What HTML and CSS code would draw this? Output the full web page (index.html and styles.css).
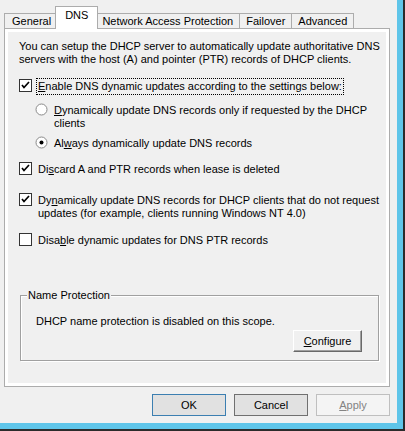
FILE: index.html
```html
<!DOCTYPE html>
<html lang="en">
<head>
    <meta charset="UTF-8">
    <title>Scope Properties - DNS</title>
    <link rel="stylesheet" href="styles.css">
</head>
<body>
    <div class="window">
        <div class="frame">
            <div class="dialog">
                <div class="tabs">
                    <div class="tab tab-first">General</div>
                    <div class="tab active">DNS</div>
                    <div class="tab">Network Access Protection</div>
                    <div class="tab">Failover</div>
                    <div class="tab">Advanced</div>
                </div>

                <div class="panel">
                    <div class="page">
                        <p class="intro">You can setup the DHCP server to automatically update authoritative DNS<br>servers with the host (A) and pointer (PTR) records of DHCP clients.</p>

                        <div class="option row-enable">
                            <span class="check checked"><svg width="11" height="11" viewBox="0 0 11 11"><polyline points="2,5 4,7.5 9,2" /></svg></span>
                            <span class="label focused"><u>E</u>nable DNS dynamic updates according to the settings below:</span>
                        </div>

                        <div class="option sub row-radio1">
                            <span class="radio"><svg width="13" height="13" viewBox="0 0 13 13"><circle cx="6.5" cy="6.5" r="5.5" class="ring" /></svg></span>
                            <span class="label"><u>D</u>ynamically update DNS records only if requested by the DHCP<br>clients</span>
                        </div>

                        <div class="option sub row-radio2">
                            <span class="radio"><svg width="13" height="13" viewBox="0 0 13 13"><circle cx="6.5" cy="6.5" r="5.5" class="ring" /><circle cx="6.5" cy="6.5" r="2" class="dot" /></svg></span>
                            <span class="label">Al<u>w</u>ays dynamically update DNS records</span>
                        </div>

                        <div class="option row-discard">
                            <span class="check checked"><svg width="11" height="11" viewBox="0 0 11 11"><polyline points="2,5 4,7.5 9,2" /></svg></span>
                            <span class="label">Di<u>s</u>card A and PTR records when lease is deleted</span>
                        </div>

                        <div class="option row-legacy">
                            <span class="check checked"><svg width="11" height="11" viewBox="0 0 11 11"><polyline points="2,5 4,7.5 9,2" /></svg></span>
                            <span class="label">Dy<u>n</u>amically update DNS records for DHCP clients that do not request<br>updates (for example, clients running Windows NT 4.0)</span>
                        </div>

                        <div class="option row-ptr">
                            <span class="check"></span>
                            <span class="label">Disa<u>b</u>le dynamic updates for DNS PTR records</span>
                        </div>

                        <div class="group">
                            <span class="group-title">Name Protection</span>
                            <p class="group-text">DHCP name protection is disabled on this scope.</p>
                            <div class="group-actions">
                                <button class="classic-btn"><u>C</u>onfigure</button>
                            </div>
                        </div>
                    </div>
                </div>

                <div class="buttons">
                    <button class="btn default">OK</button>
                    <button class="btn">Cancel</button>
                    <button class="btn disabled"><u>A</u>pply</button>
                </div>
            </div>
        </div>
    </div>
</body>
</html>
```

FILE: styles.css
```css
body {
    margin: 0;
    font-family: "Liberation Sans", Arial, sans-serif;
    font-size: 11px;
    color: #000000;
    background-color: #f0f0f0;
}
.window {
    box-sizing: border-box;
    width: 405px;
    height: 431px;
    border-right: 2px solid #2b2b2b;
    border-bottom: 2px solid #2b2b2b;
}
.frame {
    box-sizing: border-box;
    height: 100%;
    border-right: 6px solid #5fc5e9;
    border-bottom: 6px solid #5fc5e9;
}
.dialog {
    height: 100%;
    background-color: #f0f0f0;
}
.tabs {
    display: flex;
    align-items: flex-end;
    height: 21px;
    padding: 7px 0 0 4px;
}
.tab {
    box-sizing: border-box;
    height: 15px;
    line-height: 14px;
    padding: 0 6px 0 6px;
    border: 1px solid #acacac;
    border-bottom: none;
    border-left: none;
    background-color: #f0f0f0;
    white-space: nowrap;
}
.tab-first {
    border-left: 1px solid #acacac;
    padding-left: 7px;
}
.tab.active {
    position: relative;
    z-index: 1;
    height: 23px;
    line-height: 17px;
    margin: 0 -2px -1px -3px;
    padding: 0 9px 0 9px;
    border-left: 1px solid #acacac;
    background-color: #ffffff;
}
.panel {
    margin: 0 7px 0 4px;
    border: 1px solid #acacac;
    padding: 3px;
    background-color: #ffffff;
}
.page {
    height: 351px;
    padding: 8px 0 0 11px;
    background-color: #f0f0f0;
    box-sizing: border-box;
}
.intro {
    margin: 0;
    line-height: 13px;
}
.option {
    display: flex;
    align-items: flex-start;
    line-height: 13px;
}
.option .label {
    margin-left: 4px;
    padding: 1px;
    border: 1px dotted transparent;
    white-space: nowrap;
}
.option .label.focused {
    border-color: #000000;
}
.check {
    box-sizing: border-box;
    width: 13px;
    height: 13px;
    margin-top: 1px;
    border: 1px solid #333333;
    background-color: #ffffff;
    display: flex;
}
.check svg {
    display: none;
}
.check.checked svg {
    display: block;
}
.check polyline {
    fill: none;
    stroke: #000000;
    stroke-width: 1.7;
}
.radio {
    width: 13px;
    height: 13px;
    margin-top: 1px;
}
.radio svg {
    display: block;
}
.radio .ring {
    fill: #ffffff;
    stroke: #8a8a8a;
    stroke-width: 1;
}
.radio .dot {
    fill: #000000;
}
.sub {
    margin-left: 16px;
}
.row-enable {
    margin-top: 12px;
}
.row-radio1 {
    margin-top: 7px;
}
.row-radio2 {
    margin-top: 3px;
}
.row-discard {
    margin-top: 9px;
}
.row-legacy {
    margin-top: 14px;
}
.row-ptr {
    margin-top: 10px;
}
.group {
    margin: 46px 7px 0 1px;
    padding: 0 16px 8px 15px;
    border: 1px solid #a0a0a0;
    box-shadow: inset 1px 1px #ffffff, 1px 1px #ffffff;
}
.group-title {
    display: block;
    width: fit-content;
    margin: -7px 0 0 -9px;
    padding: 0 1px;
    line-height: 13px;
    background-color: #f0f0f0;
}
.group-text {
    margin: 13px 0 0 0;
    line-height: 13px;
}
.group-actions {
    display: flex;
    justify-content: flex-end;
    margin-top: 2px;
}
.classic-btn {
    width: 69px;
    height: 22px;
    padding: 0;
    font-family: inherit;
    font-size: 11px;
    color: #000000;
    background-color: #f0f0f0;
    border: 1px solid;
    border-color: #ffffff #696969 #696969 #ffffff;
    box-shadow: inset -1px -1px #a0a0a0;
}
.buttons {
    display: flex;
    justify-content: flex-end;
    gap: 8px;
    margin: 7px 7px 0 0;
}
.btn {
    width: 74px;
    height: 22px;
    padding: 0;
    font-family: inherit;
    font-size: 11px;
    color: #000000;
    background-color: #e1e1e1;
    border: 1px solid #707070;
}
.btn.default {
    border-color: #3c7fb1;
}
.btn.disabled {
    color: #838383;
    background-color: #f4f4f4;
    border-color: #bfbfbf;
}
```
